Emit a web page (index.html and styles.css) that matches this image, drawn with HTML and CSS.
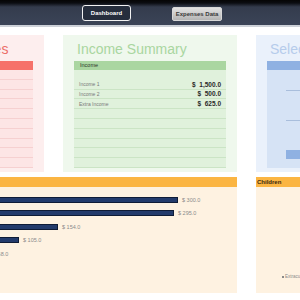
FILE: index.html
```html
<!DOCTYPE html>
<html>
<head>
<meta charset="utf-8">
<link rel="stylesheet" href="styles.css">
</head>
<body>
<header class="topbar">
  <nav class="nav">
    <span class="btn btn-active">Dashboard</span>
    <span class="btn btn-plain">Expenses Data</span>
  </nav>
</header>
<main class="grid">
  <section class="panel panel-red">
    <h2 class="title">Monthly Expenses</h2>
    <div class="thead"></div>
    <div class="tbody">
      <div class="row"></div><div class="row"></div><div class="row"></div><div class="row"></div><div class="row"></div>
      <div class="row"></div><div class="row"></div><div class="row"></div><div class="row"></div><div class="row"></div>
    </div>
  </section>
  <section class="panel panel-green">
    <h2 class="title">Income Summary</h2>
    <div class="thead">Income</div>
    <div class="tbody">
      <div class="row"></div>
      <div class="row"><span class="lbl">Income 1</span><span class="val">$&nbsp; 1,500.0</span></div>
      <div class="row"><span class="lbl">Income 2</span><span class="val">$&nbsp; 500.0</span></div>
      <div class="row"><span class="lbl">Extra Income</span><span class="val">$&nbsp; 625.0</span></div>
      <div class="row"></div><div class="row"></div><div class="row"></div><div class="row"></div><div class="row"></div><div class="row"></div>
    </div>
  </section>
  <section class="panel panel-blue">
    <h2 class="title">Select Month</h2>
    <div class="thead"></div>
    <div class="tbody sel">
      <div class="field"></div>
      <div class="field"></div>
      <div class="apply"></div>
    </div>
  </section>
  <section class="chart chart-wide">
    <div class="chead"></div>
    <div class="cbody bars">
      <div class="bar-row"><span class="bar" style="width:246px"></span><span class="blabel">$ 300.0</span></div>
      <div class="bar-row"><span class="bar" style="width:242px"></span><span class="blabel">$ 295.0</span></div>
      <div class="bar-row"><span class="bar" style="width:126px"></span><span class="blabel">$ 154.0</span></div>
      <div class="bar-row"><span class="bar" style="width:87px"></span><span class="blabel">$ 105.0</span></div>
      <div class="bar-row"><span class="bar" style="width:57px"></span><span class="blabel">$ 68.0</span></div>
    </div>
  </section>
  <section class="chart">
    <div class="chead">Children</div>
    <div class="cbody legend">
      <span class="leg"><i class="sw"></i>Extracurricular</span>
    </div>
  </section>
</main>
</body>
</html>
```
FILE: styles.css
```css
html, body {
  margin: 0;
  padding: 0;
  background: #ffffff;
  width: 300px;
  height: 300px;
  overflow: hidden;
  font-family: "Liberation Sans", Arial, sans-serif;
}
.topbar {
  height: 25px;
  background: linear-gradient(#050505 0, #0b0d12 3px, #343c4d 7px, #3b4457 100%);
  border-bottom: 2px solid #cdd1d8;
  box-sizing: content-box;
}
.nav {
  display: flex;
  align-items: flex-end;
  gap: 41px;
  padding-left: 82px;
  height: 21px;
}
.btn {
  display: flex;
  align-items: center;
  justify-content: center;
  font-size: 6px;
  font-weight: bold;
  box-sizing: border-box;
}
.btn-active {
  width: 49px;
  height: 16px;
  background: #262e3d;
  color: #ffffff;
  border: 1.5px solid #f2f2f2;
  border-radius: 3px;
}
.btn-plain {
  width: 50px;
  height: 14px;
  background: linear-gradient(#e2e2e2, #b4b4b4);
  color: #3a3a3a;
  border: 1px solid #d8d8d8;
  border-radius: 2px;
}
.grid {
  display: grid;
  grid-template-columns: 174px 174px 174px;
  column-gap: 19px;
  row-gap: 5px;
  margin-left: -130px;
  padding-top: 8px;
}
.panel {
  padding: 0 11px 4px;
  height: 137px;
  box-sizing: border-box;
}
.title {
  margin: 0;
  height: 26px;
  padding: 3px 0 0 3px;
  box-sizing: border-box;
  line-height: 23px;
  font-size: 14px;
  font-weight: normal;
  white-space: nowrap;
}
.thead {
  height: 9px;
  font-size: 5.5px;
  line-height: 9px;
  padding-left: 6px;
  color: #2d3a2a;
}
.tbody {
  height: 98px;
}
.row {
  height: 9.8px;
  box-sizing: border-box;
  display: flex;
  align-items: center;
  justify-content: space-between;
  padding: 0 5px 0 5px;
  font-size: 5px;
}
.lbl { color: #7a7a7a; }
.val { color: #2a2a2a; font-weight: bold; font-size: 6.5px; }

.panel-red { background: #fdeeee; }
.panel-red .title { color: #ec6e68; padding-left: 13px; }
.panel-red .thead { background: #f6716a; }
.panel-red .tbody { background: #fde5e5; }
.panel-red .row { border-bottom: 1px solid #f6d0d0; }

.panel-green { background: #eff8ed; }
.panel-green .title { color: #a9d6a0; }
.panel-green .thead { background: #aad6a1; }
.panel-green .tbody { background: #e0f1dc; }
.panel-green .row { border-bottom: 1px solid #cbe4c5; }
.panel-green .row:first-child { border-bottom: none; }

.panel-blue { background: #eaf1fb; }
.panel-blue .title { color: #b6cceb; }
.panel-blue .thead { background: #8fb1e2; }
.panel-blue .tbody { background: #d6e3f5; }
.sel {
  display: flex;
  flex-direction: column;
  padding: 0 19px;
}
.field {
  height: 20px;
  border-bottom: 1px solid #a9bedc;
  flex: none;
}
.field + .field { height: 29px; }
.apply {
  margin-top: 29px;
  height: 9px;
  background: #8fb1e2;
}

.chart-wide { grid-column: span 2; }
.chead {
  height: 10px;
  background: #fbb542;
  font-size: 6px;
  font-weight: bold;
  line-height: 10px;
  padding-left: 1px;
  color: #3a2a10;
}
.cbody {
  height: 106px;
  background: #fef2e1;
  box-sizing: border-box;
}
.bars {
  padding: 6px 0 0 62px;
}
.bar-row {
  height: 13.5px;
  display: flex;
  align-items: center;
  gap: 4px;
}
.bar {
  display: block;
  height: 6px;
  background: #233b6b;
  border: 1px solid #0f1c36;
  box-sizing: border-box;
}
.blabel {
  font-size: 5.5px;
  color: #8b8b8b;
}
.legend {
  display: flex;
  align-items: flex-end;
  padding: 0 0 14px 26px;
}
.leg {
  font-size: 4.5px;
  color: #8a8a8a;
  display: flex;
  align-items: center;
  gap: 1px;
}
.sw {
  display: block;
  width: 2px;
  height: 2px;
  background: #8a8a8a;
}
```
